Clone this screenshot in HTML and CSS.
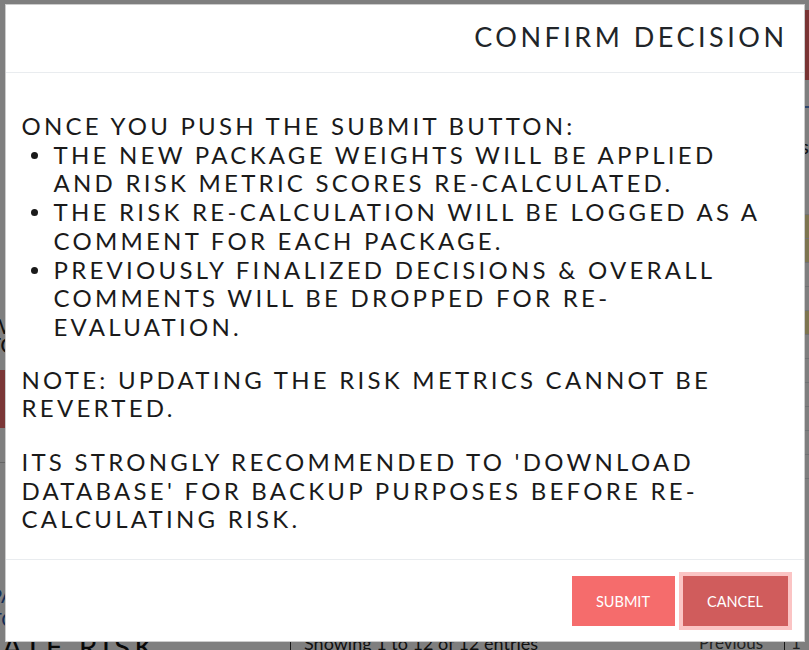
FILE: index.html
```html
<!DOCTYPE html>
<html lang="en">
<head>
<meta charset="utf-8">
<title>Confirm Decision</title>
<link rel="stylesheet" href="styles.css">
</head>
<body>
<div class="page">
  <div class="page-top">
    <aside class="side">
      <div class="side-title">WEIGHTS<br>TOTAL</div>
      <div class="side-btn"></div>
      <div class="side-rule"></div>
      <div class="side-sub">PACKAGE<br>TOTAL</div>
    </aside>
    <main class="main">
      <div class="main-bar"><span class="main-btn"></span></div>
      <div class="main-tabs"></div>
      <div class="main-head">Scores</div>
      <div class="table">
        <div class="row warn"></div>
        <div class="row warn"></div>
        <div class="row"></div>
        <div class="row"></div>
        <div class="row warn"></div>
        <div class="row"></div>
        <div class="row"></div>
        <div class="row"></div>
        <div class="row"></div>
        <div class="row"></div>
        <div class="row"></div>
        <div class="row"></div>
      </div>
    </main>
  </div>
  <div class="page-bottom">
    <div class="recalc"><span>RECALCULATE RISK</span></div>
    <div class="info">Showing 1 to 12 of 12 entries</div>
    <div class="pager"><span class="prev">Previous</span><span class="num">1</span></div>
  </div>
</div>

<div class="overlay">
  <div class="modal">
    <div class="modal-header">
      <h4 class="modal-title">CONFIRM DECISION</h4>
    </div>
    <div class="modal-body">
      <p class="lead-line">ONCE YOU PUSH THE SUBMIT BUTTON:</p>
      <ul class="points">
        <li>THE NEW PACKAGE WEIGHTS WILL BE APPLIED AND RISK METRIC SCORES RE-CALCULATED.</li>
        <li>THE RISK RE-CALCULATION WILL BE LOGGED AS A COMMENT FOR EACH PACKAGE.</li>
        <li>PREVIOUSLY FINALIZED DECISIONS &amp; OVERALL COMMENTS WILL BE DROPPED FOR RE-EVALUATION.</li>
      </ul>
      <p class="para note">NOTE: UPDATING THE RISK METRICS CANNOT BE REVERTED.</p>
      <p class="para advice">ITS STRONGLY RECOMMENDED TO 'DOWNLOAD DATABASE' FOR BACKUP PURPOSES BEFORE RE-CALCULATING RISK.</p>
    </div>
    <div class="modal-footer">
      <button class="btn btn-submit" type="button">SUBMIT</button>
      <button class="btn btn-cancel" type="button">CANCEL</button>
    </div>
  </div>
</div>
</body>
</html>
```

FILE: styles.css
```css
* { box-sizing: border-box; }

html, body {
  margin: 0;
  padding: 0;
  height: 100%;
  overflow: hidden;
}

body {
  font-family: "Lato", "Liberation Sans", sans-serif;
  color: #212529;
  background: #fff;
}

/* ---------- background page ---------- */
.page {
  width: 809px;
  height: 650px;
  display: flex;
  flex-direction: column;
  overflow: hidden;
}

.page-top {
  height: 641px;
  display: grid;
  grid-template-columns: 290px 1fr;
}

.side {
  display: flex;
  flex-direction: column;
  padding-top: 316px;
}

.side-title {
  font-size: 22px;
  line-height: 19px;
  margin-left: -12px;
  color: #222;
}

.side-btn {
  margin-top: 16px;
  width: 120px;
  height: 58px;
  background: #f56c6c;
}

.side-rule {
  margin-top: 34px;
  border-top: 1px solid #ccc;
}

.side-sub {
  margin-top: 120px;
  margin-left: -10px;
  font-size: 20px;
  line-height: 24px;
  color: #2a5db0;
}

.main {
  display: flex;
  flex-direction: column;
  padding-top: 10px;
}

.main-bar {
  display: flex;
  justify-content: flex-end;
}

.main-btn {
  width: 120px;
  height: 70px;
  background: #f26868;
}

.main-tabs {
  height: 28px;
  border-bottom: 2px solid #5b8bd9;
}

.main-head {
  height: 106px;
  padding-top: 26px;
  text-align: right;
  font-size: 20px;
  color: #222;
}

.table {
  display: flex;
  flex-direction: column;
}

.row {
  height: 24px;
  border-top: 1px solid #dee2e6;
}

.row.warn { background: #faeaa0; }

.page-bottom {
  flex: 1;
  display: flex;
  align-items: flex-start;
}

.recalc {
  width: 290px;
  display: flex;
  overflow: hidden;
  font-size: 30px;
  letter-spacing: 4px;
  line-height: 30px;
  color: #111;
}

.recalc span {
  flex: none;
  margin-left: -178px;
}

.info {
  flex: 1;
  border-left: 1px solid #333;
  padding: 1px 0 0 13px;
  font-size: 18px;
  color: #222;
}

.pager {
  display: flex;
  font-size: 17px;
  color: #444;
  padding-top: 1px;
}

.prev { width: 88px; padding-left: 3px; }
.num { border-left: 1px solid #333; padding-left: 6px; width: 25px; }

/* ---------- overlay + modal ---------- */
.overlay {
  position: fixed;
  inset: 0;
  background: rgba(0, 0, 0, 0.5);
  display: flex;
  justify-content: center;
  align-items: flex-start;
  padding-top: 4px;
}

.modal {
  width: 800px;
  background: #fff;
  border: 1px solid rgba(0, 0, 0, 0.2);
  display: flex;
  flex-direction: column;
}

.modal-header {
  padding: 13px 16px 17px;
  border-bottom: 1px solid #e9ecef;
  display: flex;
  justify-content: flex-end;
}

.modal-title {
  margin: 0;
  font-weight: 400;
  font-size: 27px;
  line-height: 37px;
  letter-spacing: 3.5px;
  color: #212529;
}

.modal-body {
  padding: 15px 16px 25px 16px;
  font-size: 24px;
  line-height: 28.7px;
  letter-spacing: 3.25px;
  color: #1a1a1a;
}

.lead-line {
  margin: 24px 0 0;
}

.points {
  list-style: none;
  margin: 0;
  padding: 0;
}

.points li {
  display: flex;
  align-items: flex-start;
}

.points li::before {
  content: "";
  flex: none;
  width: 7px;
  height: 7px;
  border-radius: 50%;
  background: #1a1a1a;
  margin: 11px 16px 0 9px;
}

.para.note { margin: 24px 0 0; }
.para.advice { margin: 25px 0 0; }

.modal-footer {
  border-top: 1px solid #e9ecef;
  padding: 16px 16px 15px;
  display: flex;
  justify-content: flex-end;
  gap: 8px;
}

.btn {
  height: 50px;
  border: 0;
  padding: 0;
  font-family: "Lato", "Liberation Sans", sans-serif;
  font-size: 14.5px;
  color: #fff;
  cursor: pointer;
}

.btn-submit {
  background: #f56c6c;
  width: 103px;
}

.btn-cancel {
  background: #d05c5c;
  width: 105px;
  box-shadow: 0 0 0 4px #fbc4c4;
}
```
